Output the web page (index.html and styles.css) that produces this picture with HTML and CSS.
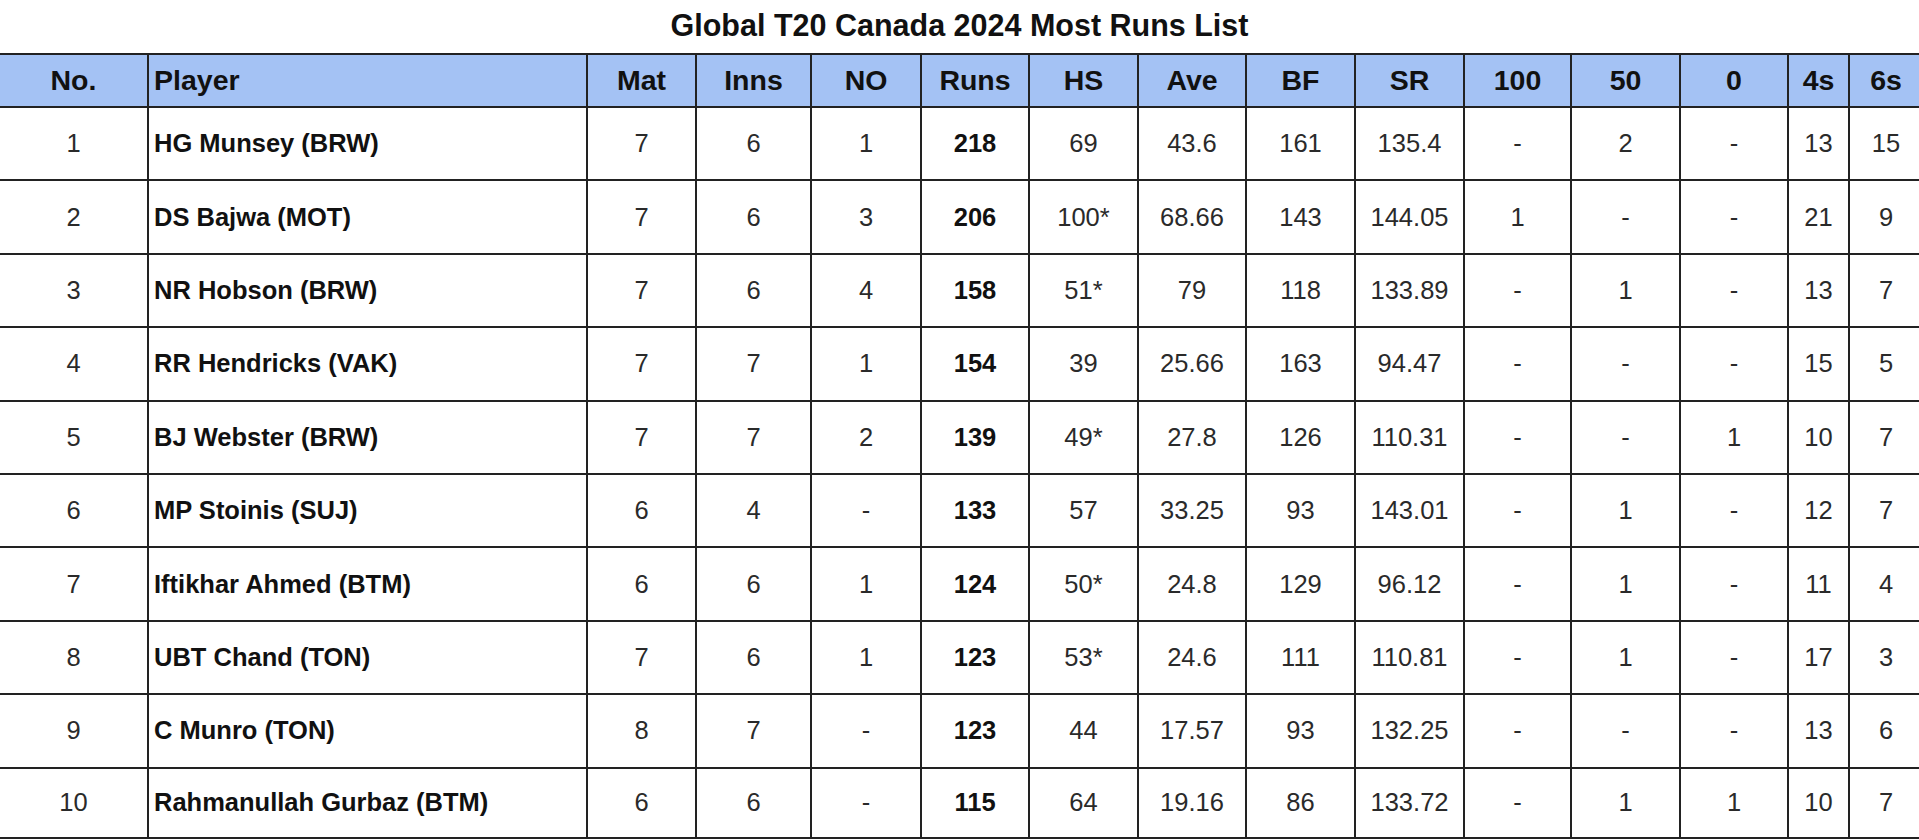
FILE: index.html
```html
<!DOCTYPE html>
<html>
<head>
<meta charset="utf-8">
<link rel="stylesheet" href="styles.css">
</head>
<body>
<div class="title">Global T20 Canada 2024 Most Runs List</div>
<table class="runs">
<colgroup>
<col class="c-no"><col class="c-player"><col class="c-mat"><col class="c-inns"><col class="c-notout"><col class="c-runs"><col class="c-hs"><col class="c-ave"><col class="c-bf"><col class="c-sr"><col class="c-100"><col class="c-50"><col class="c-0"><col class="c-4s"><col class="c-6s">
</colgroup>
<thead>
<tr><th>No.</th><th class="left">Player</th><th>Mat</th><th>Inns</th><th>NO</th><th>Runs</th><th>HS</th><th>Ave</th><th>BF</th><th>SR</th><th>100</th><th>50</th><th>0</th><th>4s</th><th>6s</th></tr>
</thead>
<tbody>
<tr><td>1</td><td class="player">HG Munsey (BRW)</td><td>7</td><td>6</td><td>1</td><td class="bold">218</td><td>69</td><td>43.6</td><td>161</td><td>135.4</td><td>-</td><td>2</td><td>-</td><td>13</td><td>15</td></tr>
<tr><td>2</td><td class="player">DS Bajwa (MOT)</td><td>7</td><td>6</td><td>3</td><td class="bold">206</td><td>100*</td><td>68.66</td><td>143</td><td>144.05</td><td>1</td><td>-</td><td>-</td><td>21</td><td>9</td></tr>
<tr><td>3</td><td class="player">NR Hobson (BRW)</td><td>7</td><td>6</td><td>4</td><td class="bold">158</td><td>51*</td><td>79</td><td>118</td><td>133.89</td><td>-</td><td>1</td><td>-</td><td>13</td><td>7</td></tr>
<tr><td>4</td><td class="player">RR Hendricks (VAK)</td><td>7</td><td>7</td><td>1</td><td class="bold">154</td><td>39</td><td>25.66</td><td>163</td><td>94.47</td><td>-</td><td>-</td><td>-</td><td>15</td><td>5</td></tr>
<tr><td>5</td><td class="player">BJ Webster (BRW)</td><td>7</td><td>7</td><td>2</td><td class="bold">139</td><td>49*</td><td>27.8</td><td>126</td><td>110.31</td><td>-</td><td>-</td><td>1</td><td>10</td><td>7</td></tr>
<tr><td>6</td><td class="player">MP Stoinis (SUJ)</td><td>6</td><td>4</td><td>-</td><td class="bold">133</td><td>57</td><td>33.25</td><td>93</td><td>143.01</td><td>-</td><td>1</td><td>-</td><td>12</td><td>7</td></tr>
<tr><td>7</td><td class="player">Iftikhar Ahmed (BTM)</td><td>6</td><td>6</td><td>1</td><td class="bold">124</td><td>50*</td><td>24.8</td><td>129</td><td>96.12</td><td>-</td><td>1</td><td>-</td><td>11</td><td>4</td></tr>
<tr><td>8</td><td class="player">UBT Chand (TON)</td><td>7</td><td>6</td><td>1</td><td class="bold">123</td><td>53*</td><td>24.6</td><td>111</td><td>110.81</td><td>-</td><td>1</td><td>-</td><td>17</td><td>3</td></tr>
<tr><td>9</td><td class="player">C Munro (TON)</td><td>8</td><td>7</td><td>-</td><td class="bold">123</td><td>44</td><td>17.57</td><td>93</td><td>132.25</td><td>-</td><td>-</td><td>-</td><td>13</td><td>6</td></tr>
<tr class="last"><td>10</td><td class="player">Rahmanullah Gurbaz (BTM)</td><td>6</td><td>6</td><td>-</td><td class="bold">115</td><td>64</td><td>19.16</td><td>86</td><td>133.72</td><td>-</td><td>1</td><td>1</td><td>10</td><td>7</td></tr>
</tbody>
</table>
</body>
</html>
```

FILE: styles.css
```css
html, body {
  margin: 0;
  padding: 0;
  background: #ffffff;
  overflow: hidden;
}
body {
  width: 1919px;
  height: 840px;
  font-family: "Liberation Sans", Arial, sans-serif;
  color: #2a2a2a;
}
.title {
  height: 53px;
  line-height: 50px;
  text-align: center;
  font-weight: bold;
  font-size: 30.5px;
  color: #111111;
}
.runs {
  border-collapse: collapse;
  table-layout: fixed;
  width: 1924px;
  margin-left: -2px;
}
.c-no { width: 149px; }
.c-player { width: 439px; }
.c-mat { width: 109px; }
.c-inns { width: 115px; }
.c-notout { width: 110px; }
.c-runs { width: 108px; }
.c-hs { width: 109px; }
.c-ave { width: 108px; }
.c-bf { width: 109px; }
.c-sr { width: 109px; }
.c-100 { width: 107px; }
.c-50 { width: 109px; }
.c-0 { width: 108px; }
.c-4s { width: 61px; }
.c-6s { width: 74px; }
.runs th, .runs td {
  border: 2px solid #222222;
  padding: 0;
  text-align: center;
  white-space: nowrap;
  overflow: hidden;
}
.runs th {
  height: 51px;
  background: #a4c2f4;
  font-size: 28.5px;
  font-weight: bold;
  color: #111111;
}
.runs td {
  height: 71.4px;
  font-size: 25.5px;
}
.runs tr.last td {
  height: 68px;
}
.runs th.left, .runs td.player {
  text-align: left;
  padding-left: 5px;
}
.runs td.player {
  font-weight: bold;
  color: #111111;
}
.runs td.bold {
  font-weight: bold;
  color: #111111;
}
```
